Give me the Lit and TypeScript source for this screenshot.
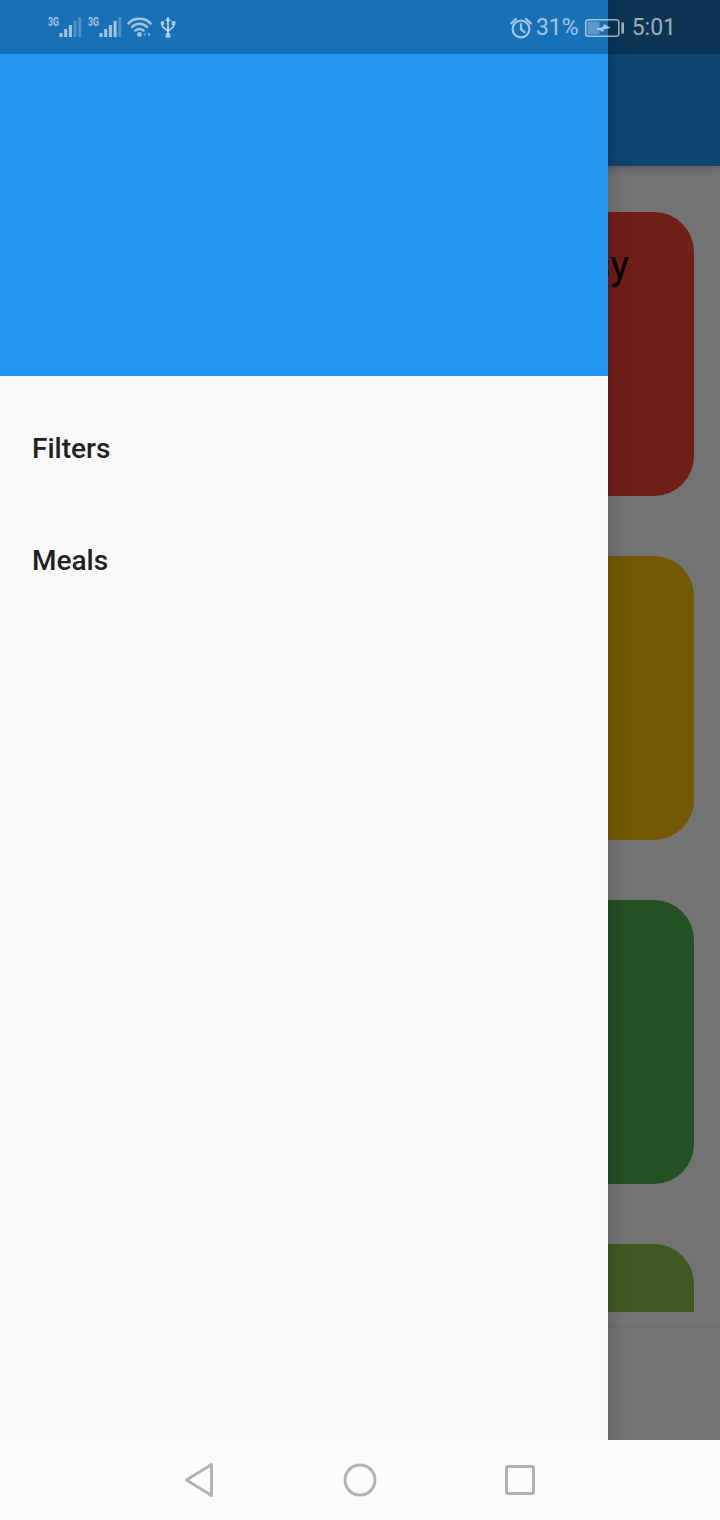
import { LitElement, html, css, svg } from "lit";
import { customElement } from "lit/decorators.js";

const signal = (bright: number) => {
  const xs = [11.5, 16.2, 20.9, 25.6, 30.3];
  const hs = [4, 8, 12, 16, 20];
  return svg`
  <svg width="34" height="26" viewBox="0 0 34 26">
    <text x="0" y="12" font-family="Roboto, sans-serif" font-size="12.5" font-weight="700" textLength="11" lengthAdjust="spacingAndGlyphs" fill="currentColor">3G</text>
    ${xs.map(
      (x, i) =>
        svg`<rect x="${x}" y="${23 - hs[i]}" width="3" height="${hs[i]}" fill="currentColor" opacity="${i < bright ? 1 : 0.4}"/>`
    )}
  </svg>`;
};

@customElement("app-root")
export class AppRoot extends LitElement {
  static styles = css`
    :host {
      display: block;
      width: 720px;
      height: 1520px;
      font-family: Roboto, "Noto Sans", sans-serif;
      overflow: hidden;
    }
    .page { display: flex; flex-direction: column; width: 720px; height: 1520px; }
    .screen {
      position: relative;
      height: 1440px;
      background: #fafafa;
      overflow: hidden;
      display: flex;
      flex-direction: column;
    }
    .appbar {
      height: 166px;
      flex: none;
      background: #2196f3;
      box-shadow: 0 3px 6px rgba(0, 0, 0, 0.2);
    }
    .body { height: 1146px; flex: none; overflow: hidden; }
    .grid {
      display: grid;
      grid-template-columns: 314px 314px;
      grid-auto-rows: 284px;
      gap: 60px 40px;
      padding: 46px 26px;
    }
    .card {
      border-radius: 40px;
      padding: 30px 20px;
      font-size: 40px;
      line-height: 47px;
      color: #000;
    }
    .bottom {
      margin-top: 16px;
      flex: 1;
      background: #fafafa;
      box-shadow: 0 -1px 2px rgba(0, 0, 0, 0.06);
    }
    .scrim { position: absolute; inset: 0; background: rgba(0, 0, 0, 0.54); }
    .drawer {
      position: absolute;
      left: 0;
      top: 0;
      bottom: 0;
      width: 608px;
      background: #fafafa;
      box-shadow: 0 0 20px rgba(0, 0, 0, 0.22);
      display: flex;
      flex-direction: column;
    }
    .drawer-head { height: 376px; flex: none; background: #2196f3; }
    .list { padding: 16px 0; display: flex; flex-direction: column; }
    .item {
      height: 112px;
      padding: 0 32px;
      display: flex;
      align-items: center;
      font-size: 28px;
      font-weight: 500;
      color: #212121;
    }
    .status {
      position: absolute;
      left: 0;
      right: 0;
      top: 0;
      height: 54px;
      box-sizing: border-box;
      padding: 0 44px 0 48px;
      background: rgba(0, 0, 0, 0.25);
      color: rgba(255, 255, 255, 0.6);
      display: flex;
      align-items: center;
      justify-content: space-between;
    }
    .group { display: flex; align-items: center; }
    .left { gap: 6px; }
    .left svg { display: block; }
    .wifi { margin-left: -1px; }
    .right { font-size: 23px; padding-top: 1px; }
    .pct { margin: 0 6px 0 4px; }
    .time { margin-left: 7px; }
    .nav {
      height: 80px;
      flex: none;
      background: #fcfcfc;
      display: flex;
      align-items: center;
      justify-content: center;
      gap: 112px;
    }
    .nav svg { display: block; }
  `;

  render() {
    return html`
      <div class="page">
        <div class="screen">
          <div class="appbar"></div>
          <div class="body">
            <div class="grid">
              <div class="card" style="background:#9c27b0"></div>
              <div class="card" style="background:#f44336">Quick &amp; Easy</div>
              <div class="card" style="background:#ff9800"></div>
              <div class="card" style="background:#ffc107"></div>
              <div class="card" style="background:#2196f3"></div>
              <div class="card" style="background:#4caf50"></div>
              <div class="card" style="background:#00bcd4"></div>
              <div class="card" style="background:#8bc34a"></div>
            </div>
          </div>
          <div class="bottom"></div>
          <div class="scrim"></div>
          <div class="drawer">
            <div class="drawer-head"></div>
            <div class="list">
              <div class="item">Filters</div>
              <div class="item">Meals</div>
            </div>
          </div>
          <div class="status">
            <div class="group left">
              ${signal(3)}${signal(4)}
              <svg class="wifi" width="27" height="26" viewBox="0 0 27 26" fill="none" stroke="currentColor" stroke-linecap="round" stroke-width="2.5">
                <path d="M1.5 9.5C6.5 3.2 18.5 3.2 23.5 9.5"/>
                <path d="M5 13C9 8.8 16 8.8 20 13"/>
                <path d="M8.5 16.5C11 14.6 14 14.6 16.5 16.5"/>
                <circle cx="12.5" cy="20.5" r="2.4" fill="currentColor" stroke="none"/>
                <path d="M18.5 18.5v4l-2-2zM21 18.5v4l3 -2z" fill="currentColor" stroke="none" opacity="0.75"/>
              </svg>
              <svg width="16" height="26" viewBox="0 0 16 26" fill="none" stroke="currentColor" stroke-width="2">
                <path d="M8 6v15"/>
                <path d="M8 2.5l3 4.5H5z" fill="currentColor" stroke="none"/>
                <circle cx="8" cy="21.5" r="2.6" fill="currentColor" stroke="none"/>
                <circle cx="2.4" cy="9" r="1.9" fill="currentColor" stroke="none"/>
                <rect x="11.6" y="7" width="3.8" height="3.8" fill="currentColor" stroke="none"/>
                <path d="M2.4 10v2.2c0 1.8 5.6 3.4 5.6 5.3M13.5 10v2.2c0 1.8 -5.5 3.4 -5.5 5.3"/>
              </svg>
            </div>
            <div class="group right">
              <svg width="22" height="24" viewBox="0 0 22 24" fill="none" stroke="currentColor" stroke-width="2.2">
                <circle cx="11" cy="13" r="8.4"/>
                <path d="M11 8v5.5l3.6 2.6" stroke-linecap="round"/>
                <path d="M1.2 7.4l4.6-4.4M20.8 7.4l-4.6-4.4" stroke-linecap="round"/>
              </svg>
              <span class="pct">31%</span>
              <svg width="40" height="20" viewBox="0 0 40 20" fill="none">
                <rect x="0.75" y="1.75" width="33" height="16.5" rx="2.5" stroke="currentColor" stroke-width="1.5"/>
                <rect x="2.5" y="3.5" width="12" height="13" fill="currentColor" opacity="0.5"/>
                <rect x="36.3" y="4.5" width="2.7" height="11" fill="currentColor"/>
                <path d="M11 10.5l7-1.6 1-2.9 7 4-7 1.2-1 2.9z" fill="#fff" opacity="0.6"/>
              </svg>
              <span class="time">5:01</span>
            </div>
          </div>
        </div>
        <div class="nav">
          <svg width="60" height="44" viewBox="0 0 60 44" fill="none" stroke="#b3b3b3" stroke-width="3" stroke-linejoin="round">
            <path d="M41.5 6.5v31L16.5 22z"/>
          </svg>
          <svg width="36" height="36" viewBox="0 0 36 36" fill="none" stroke="#b3b3b3" stroke-width="3">
            <circle cx="18" cy="18" r="15"/>
          </svg>
          <svg width="60" height="44" viewBox="0 0 60 44" fill="none" stroke="#b3b3b3" stroke-width="3" stroke-linejoin="round">
            <rect x="16.5" y="8.5" width="27" height="27" rx="1.5"/>
          </svg>
        </div>
      </div>
    `;
  }
}
